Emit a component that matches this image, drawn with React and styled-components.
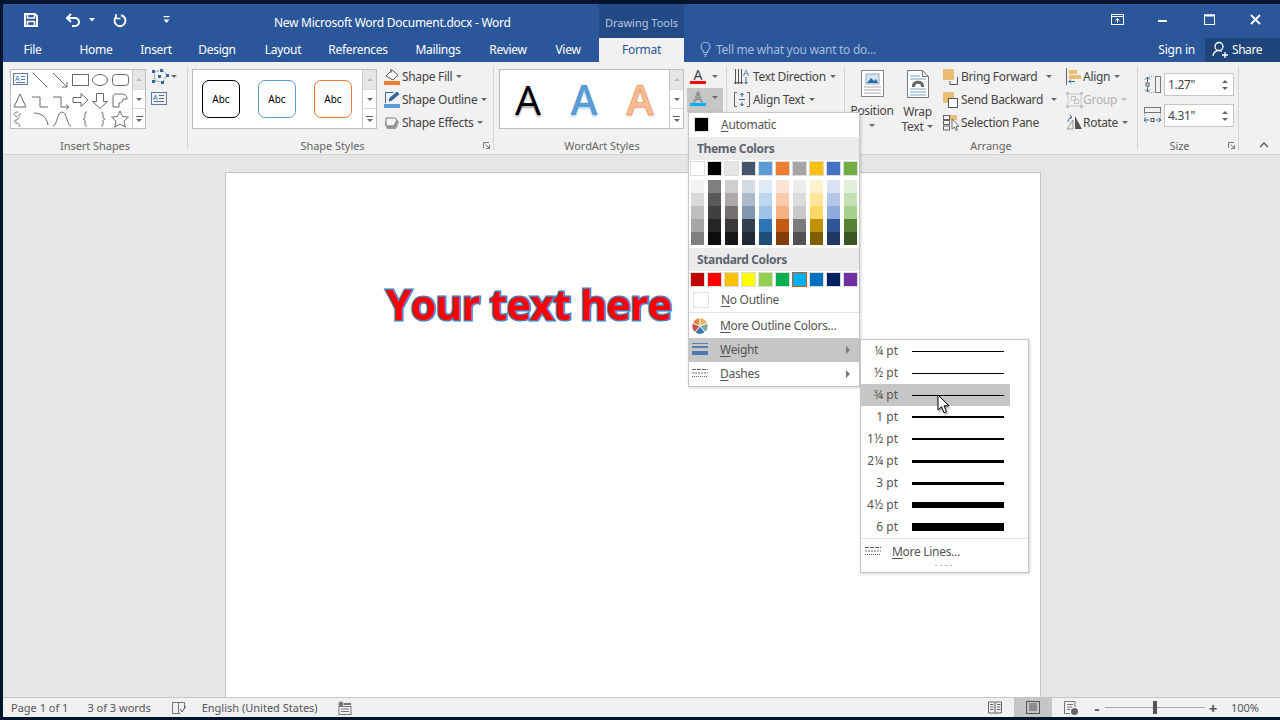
import React from "react"
import styled, { createGlobalStyle } from "styled-components"

const GlobalStyle = createGlobalStyle`
  html, body { margin: 0; padding: 0; background: #02132e; }
  body { font-family: "Noto Sans", "Open Sans", sans-serif; font-size: 12px; color: #444; }
  * { box-sizing: border-box; }
  u { text-underline-offset: 2px; }
`

const Window = styled.div`
  position: relative;
  width: 1280px;
  height: 720px;
  overflow: hidden;
  display: flex;
  flex-direction: column;
  padding: 4px 0 3px 3px;
  background: #02132e;
`
const TitleBar = styled.div`
  height: 34px;
  display: flex;
  align-items: center;
  background: #2b579a;
  color: #fff;
`
const Qat = styled.div`
  width: 271px;
  height: 100%;
  display: flex;
  align-items: center;
  padding-bottom: 2px;
`
const QatButton = styled.span`
  display: flex;
  margin-left: ${p => p.$gap}px;
`
const DocTitle = styled.div`
  width: 325px;
  padding-top: 2px;
  white-space: nowrap;
  letter-spacing: -0.27px;
`
const ContextTab = styled.div`
  width: 85px;
  height: 100%;
  background: #234a84;
  color: #b4c6e3;
  font-size: 11px;
  text-align: center;
  padding-top: 11px;
`
const WinButtons = styled.div`
  margin-left: auto;
  display: flex;
  padding: 0 2px 2px 0;
`
const WinButton = styled.span`
  width: 46px;
  display: flex;
  justify-content: center;
`
const TabRow = styled.div`
  height: 24px;
  display: flex;
  align-items: stretch;
  background: #2b579a;
`
const Tab = styled.div`
  width: ${p => p.$w}px;
  margin-right: ${p => p.$after || 0}px;
  display: flex;
  align-items: center;
  justify-content: center;
  padding-bottom: 1px;
  color: ${p => (p.$active ? "#2b579a" : "#fff")};
  background: ${p => (p.$active ? "#f1f1f1" : "transparent")};
  letter-spacing: -0.3px;
`
const Search = styled.div`
  margin-left: 16px;
  display: flex;
  align-items: center;
  gap: 5px;
  padding-bottom: 1px;
  color: #a6bcdd;
  letter-spacing: -0.27px;
`
const SignIn = styled.div`
  margin-left: auto;
  display: flex;
  align-items: stretch;
  color: #fff;
  letter-spacing: -0.2px;
`
const SignInText = styled.span`
  display: flex;
  align-items: center;
  padding-bottom: 2px;
`
const Share = styled.div`
  width: 75px;
  margin-left: 10px;
  display: flex;
  align-items: center;
  gap: 3px;
  padding: 0 0 1px 7px;
  color: #fff;
  background: #1f4479;
  letter-spacing: -0.45px;
`
const Ribbon = styled.div`
  height: 93px;
  display: flex;
  background: #f1f1f1;
  border-bottom: 1px solid #d2d2d2;
`
const Group = styled.div`
  width: ${p => p.$w}px;
  display: flex;
  flex-direction: column;
`
const GroupBody = styled.div`
  height: 72px;
  display: flex;
  align-items: flex-start;
  padding-left: ${p => p.$left || 0}px;
`
const GroupLabel = styled.div`
  position: relative;
  height: 20px;
  font-size: 11px;
  color: #666;
  text-align: center;
  padding: 4px ${p => p.$right || 0}px 0 0;
  letter-spacing: -0.05px;
`
const Launcher = styled.span`
  position: absolute;
  right: 3px;
  top: 8px;
  display: flex;
`
const Sep = styled.div`
  width: 1px;
  height: 84px;
  margin-top: 4px;
  background: #d6d6d6;
`
const Gallery = styled.div`
  width: ${p => p.$w}px;
  height: 60px;
  margin-top: 7px;
  display: flex;
  background: #fff;
  border: 1px solid #bdbdbd;
`
const GalleryItems = styled.div`
  flex: 1;
  display: flex;
  align-items: center;
  gap: ${p => p.$gap || 0}px;
  padding-left: ${p => p.$left || 0}px;
`
const ScrollCol = styled.div`
  width: 14px;
  display: flex;
  flex-direction: column;
  border-left: 1px solid #c8c8c8;
  background: #fff;
`
const ScrollCell = styled.div`
  flex: 1;
  display: flex;
  align-items: center;
  justify-content: center;
  background: ${p => (p.$off ? "#e6e6e6" : "#fff")};
  border-bottom: 1px solid #dcdcdc;
  &:last-child { border-bottom: 0; }
`
const Up = styled.span`
  width: 0;
  height: 0;
  border: 3px solid transparent;
  border-top: 0;
  border-bottom: 3px solid ${p => p.$c || "#777"};
`
const Caret = styled.span`
  width: 0;
  height: 0;
  flex: none;
  margin-left: ${p => p.$gap ?? 4}px;
  border: 3px solid transparent;
  border-bottom: 0;
  border-top: 3px solid ${p => (p.$off ? "#bbb" : "#666")};
`
const MoreLine = styled.span`
  width: 7px;
  height: 6px;
  border-top: 1px solid #666;
  position: relative;
  display: flex;
  justify-content: center;
  align-items: flex-end;
`
const SideTools = styled.div`
  margin: 7px 0 0 5px;
  display: flex;
  flex-direction: column;
  gap: 8px;
`
const Row = styled.div`
  display: flex;
  align-items: center;
`
const Stack = styled.div`
  margin: 3px 0 0 ${p => p.$left || 0}px;
  display: flex;
  flex-direction: column;
`
const Tool = styled.div`
  height: 23px;
  display: flex;
  align-items: center;
  white-space: nowrap;
  letter-spacing: -0.32px;
  color: ${p => (p.$off ? "#b1b1b1" : "#444")};
`
const ToolIcon = styled.span`
  width: ${p => p.$w || 18}px;
  flex: none;
  display: flex;
`
const AbcBox = styled.div`
  width: 38px;
  height: 38px;
  border-radius: 7px;
  border: 1.5px solid ${p => p.$c};
  display: flex;
  align-items: center;
  justify-content: center;
  font-size: 10px;
  color: #000;
`
const ArtLetter = styled.span`
  width: 56px;
  text-align: center;
  font-family: "Open Sans", sans-serif;
  font-weight: ${p => p.$weight};
  font-size: 41px;
  line-height: 1;
  color: ${p => p.$c};
  text-shadow: 0 2px 2px ${p => p.$shade};
  -webkit-text-stroke: ${p => (p.$stroke ? `0.6px ${p.$stroke}` : "0")};
`
const TextEffects = styled.div`
  width: 36px;
  margin: 4px 0 0 3px;
  display: flex;
  flex-direction: column;
`
const LetterBtn = styled.div`
  height: ${p => p.$h}px;
  display: flex;
  align-items: center;
  padding: 0 0 ${p => p.$pb}px 3px;
  background: ${p => (p.$on ? "#c6c6c6" : "transparent")};
`
const LetterMark = styled.span`
  width: 16px;
  display: flex;
  flex-direction: column;
  align-items: center;
  font-size: 14px;
  line-height: 13px;
  color: ${p => (p.$outline ? "#f4f4f4" : "#444")};
  -webkit-text-stroke: ${p => (p.$outline ? "0.6px #555" : "0")};
  &::after {
    content: "";
    width: 16px;
    height: 3px;
    background: ${p => p.$bar};
  }
`
const BigTool = styled.div`
  width: ${p => p.$w}px;
  margin-top: 8px;
  display: flex;
  flex-direction: column;
  align-items: center;
  line-height: 15px;
  letter-spacing: -0.3px;
`
const BigLabel = styled.div`
  margin-top: 6px;
  text-align: center;
`
const CaretLine = styled.div`
  height: 14px;
  display: flex;
  align-items: center;
  justify-content: center;
`
const SizeRows = styled.div`
  margin: 11px 0 0 6px;
  display: flex;
  flex-direction: column;
  gap: 8px;
`
const SizeInput = styled.div`
  width: 70px;
  height: 23px;
  margin-left: 3px;
  display: flex;
  align-items: center;
  justify-content: space-between;
  padding: 0 5px 0 3px;
  background: #fff;
  border: 1px solid #c6c6c6;
  letter-spacing: -0.3px;
`
const Spin = styled.span`
  display: flex;
  flex-direction: column;
  gap: 4px;
`
const Collapse = styled.div`
  flex: 1;
  display: flex;
  align-items: flex-end;
  justify-content: center;
  padding: 0 0 6px 8px;
`
const DocArea = styled.div`
  flex: 1;
  min-height: 0;
  padding: 17px 0 0 222px;
  background: #e6e6e6;
  display: flex;
`
const Page = styled.div`
  width: 816px;
  background: #fff;
  border: 1px solid #c6c6c6;
  border-bottom: 0;
  padding: 103px 0 0 160px;
`
const ArtText = styled.div`
  font-family: "Open Sans", sans-serif;
  font-weight: 700;
  font-size: 41px;
  line-height: 56px;
  letter-spacing: -0.72px;
  white-space: nowrap;
  color: #ff0000;
  -webkit-text-stroke: 3px #4a7ebb;
  paint-order: stroke fill;
  text-shadow: 1px 1px 0 #4a7ebb;
`
const StatusBar = styled.div`
  height: 20px;
  display: flex;
  align-items: center;
  background: #f1f1f1;
  border-top: 1px solid #c6c6c6;
  color: #555;
  font-size: 11px;
  padding-left: 8px;
`
const StatusText = styled.span`
  margin-left: ${p => p.$gap || 0}px;
  white-space: nowrap;
`
const StatusIcon = styled.span`
  margin-left: ${p => p.$gap}px;
  display: flex;
`
const StatusRight = styled.div`
  margin-left: auto;
  height: 100%;
  display: flex;
  align-items: center;
  padding-right: 21px;
`
const ViewGroup = styled.div`
  height: 100%;
  display: flex;
  margin-right: 2px;
`
const ViewBtn = styled.span`
  width: 38px;
  height: 100%;
  display: flex;
  align-items: center;
  justify-content: center;
  background: ${p => (p.$on ? "#c6c6c6" : "transparent")};
`
const ZoomSlider = styled.div`
  position: relative;
  width: 100px;
  height: 1px;
  margin: 0 3px;
  background: #a8a8a8;
`
const ZoomThumb = styled.span`
  position: absolute;
  left: 48px;
  top: -6px;
  width: 4px;
  height: 13px;
  background: #555;
`
const ZoomSign = styled.span`
  width: 10px;
  text-align: center;
  font-size: 15px;
  font-weight: 700;
  line-height: 14px;
  color: #555;
`
const Menu = styled.div`
  position: absolute;
  left: ${p => p.$x}px;
  top: ${p => p.$y}px;
  width: ${p => p.$w}px;
  height: ${p => p.$h}px;
  background: #fff;
  border: 1px solid #c6c6c6;
  box-shadow: 1px 1px 3px rgba(0, 0, 0, 0.18);
`
const MenuHead = styled.div`
  height: 23px;
  margin-top: ${p => p.$top || 0}px;
  padding-left: 8px;
  display: flex;
  align-items: center;
  background: #ebebeb;
  color: #5d6470;
  font-weight: 700;
  letter-spacing: -0.35px;
`
const MenuItem = styled.div`
  height: ${p => p.$h || 24}px;
  margin-top: ${p => p.$top || 0}px;
  display: flex;
  align-items: center;
  padding-bottom: 1px;
  background: ${p => (p.$on ? "#c6c6c6" : "transparent")};
  color: #555;
  letter-spacing: -0.3px;
`
const MenuIcon = styled.span`
  width: ${p => p.$w}px;
  flex: none;
  display: flex;
  padding-left: ${p => p.$left}px;
`
const Arrow = styled.span`
  width: 0;
  height: 0;
  margin: 0 9px 0 auto;
  border: 4px solid transparent;
  border-right: 0;
  border-left: 4px solid #7a7a7a;
`
const Divider = styled.div`
  height: 1px;
  margin-top: ${p => p.$top || 0}px;
  margin-bottom: ${p => p.$bottom || 0}px;
  background: #e2e2e2;
`
const SwatchRow = styled.div`
  display: flex;
  gap: 4px;
  padding-left: 2px;
  margin-top: ${p => p.$top}px;
`
const Swatch = styled.span`
  width: 13px;
  height: 13px;
  background: ${p => p.$c};
  box-shadow: ${p =>
    p.$picked ? "0 0 0 1px #c55a11" : p.$ring ? "0 0 0 1px #dcdcdc" : "none"};
`
const ShadeCol = styled.span`
  width: 13px;
  display: flex;
  flex-direction: column;
`
const Shade = styled.span`
  height: 13px;
  background: ${p => p.$c};
`
const ColorChip = styled.span`
  width: ${p => p.$s}px;
  height: ${p => p.$s}px;
  margin-left: ${p => p.$left}px;
  margin-right: ${p => p.$right}px;
  background: ${p => p.$c};
  border: 1px solid ${p => p.$line};
`
const WeightList = styled.div`
  width: 149px;
`
const WeightRow = styled.div`
  height: 22px;
  display: flex;
  align-items: center;
  background: ${p => (p.$on ? "#c6c6c6" : "transparent")};
  color: #555;
`
const WeightLabel = styled.span`
  width: 37px;
  margin: 0 14px -1px 0;
  padding-bottom: 2px;
  text-align: right;
  white-space: nowrap;
`
const WeightLine = styled.span`
  width: 92px;
  height: ${p => p.$t}px;
  background: #000;
`
const Grip = styled.div`
  display: flex;
  justify-content: center;
  gap: 3px;
  margin-top: 2px;
  padding-right: 2px;
`
const GripDot = styled.span`
  width: 2px;
  height: 1px;
  background: #b5b5b5;
`
const Cursor = styled.span`
  position: absolute;
  left: 937px;
  top: 394px;
  display: flex;
  filter: drop-shadow(1px 2px 1px rgba(0, 0, 0, 0.35));
`

const THEME = [
  ["#ffffff", "#f2f2f2", "#d9d9d9", "#bfbfbf", "#a6a6a6", "#7f7f7f"],
  ["#000000", "#7f7f7f", "#595959", "#404040", "#262626", "#0d0d0d"],
  ["#e7e6e6", "#d0cece", "#aeaaaa", "#757070", "#3a3838", "#171616"],
  ["#44546a", "#d6dce5", "#adb9ca", "#8497b0", "#323f4f", "#222a35"],
  ["#5b9bd5", "#deebf7", "#bdd7ee", "#9dc3e6", "#2e75b6", "#1f4e79"],
  ["#ed7d31", "#fbe5d6", "#f8cbad", "#f4b183", "#c55a11", "#843c0c"],
  ["#a5a5a5", "#ededed", "#dbdbdb", "#c9c9c9", "#7b7b7b", "#525252"],
  ["#ffc000", "#fff2cc", "#ffe699", "#ffd966", "#bf9000", "#7f6000"],
  ["#4472c4", "#dae3f3", "#b4c7e7", "#8faadc", "#2f5597", "#203864"],
  ["#70ad47", "#e2f0d9", "#c5e0b4", "#a9d18e", "#548235", "#385723"],
]
const STANDARD = ["#c00000", "#ff0000", "#ffc000", "#ffff00", "#92d050", "#00b050", "#00b0f0", "#0070c0", "#002060", "#7030a0"]
const WEIGHTS = [["¼ pt", 1], ["½ pt", 1], ["¾ pt", 1], ["1 pt", 2], ["1½ pt", 2], ["2¼ pt", 3], ["3 pt", 3], ["4½ pt", 6], ["6 pt", 8]]
const TABS = [["File", 59], ["Home", 68], ["Insert", 52], ["Design", 70], ["Layout", 62], ["References", 88], ["Mailings", 72], ["Review", 68], ["View", 52, 5]]

const SaveIcon = () => (
  <svg width="16" height="16" viewBox="0 0 16 16" fill="none" stroke="#fff" strokeWidth="2">
    <path d="M2 2h10l2 2v10H2z" /><path d="M4.5 2v4h7V2M4.5 14V9.5h7V14" strokeWidth="1.6" />
  </svg>
)
const UndoIcon = () => (
  <svg width="16" height="14" viewBox="0 0 16 14" fill="none" stroke="#fff" strokeWidth="2">
    <path d="M6 1L2 5l4 4" /><path d="M2.5 5H10a4 4 0 0 1 0 8H7" />
  </svg>
)
const RedoIcon = () => (
  <svg width="15" height="15" viewBox="0 0 15 15" fill="none" stroke="#fff" strokeWidth="2">
    <path d="M8 2.2a5.5 5.5 0 1 1-5 1.6" /><path d="M3 1v4.5h4.5" strokeWidth="1.6" />
  </svg>
)
const CustomizeIcon = () => (
  <svg width="7" height="8" viewBox="0 0 7 8" fill="#fff"><rect width="6" height="1.2" x="0.5" /><path d="M0.5 3.5h6L3.5 7z" /></svg>
)
const WhiteCaret = () => (
  <svg width="6" height="4" viewBox="0 0 6 4" fill="#fff"><path d="M0 0h6L3 3.5z" /></svg>
)
const Bulb = () => (
  <svg width="11" height="15" viewBox="0 0 11 15" fill="none" stroke="#a6bcdd" strokeWidth="1.1">
    <path d="M3.5 10.5C3.5 8 1 7.5 1 4.8a4.5 4.5 0 0 1 9 0C10 7.5 7.5 8 7.5 10.5zM3.8 12.5h3.4M4.5 14.3h2" />
  </svg>
)
const Person = () => (
  <svg width="17" height="17" viewBox="0 0 17 17" fill="none" stroke="#fff" strokeWidth="1.3">
    <circle cx="7" cy="5.5" r="4" /><path d="M1 15c.5-3.5 3-5.5 6-5.5 1 0 2 .2 2.8.7M10 14h6M13 11v6" />
  </svg>
)

const ShapesGrid = () => (
  <svg width="121" height="58" viewBox="1 0 121 58" fill="none" stroke="#6a6a6a" strokeWidth="1">
    <rect x="3.5" y="3.5" width="14" height="11" stroke="#5a7ea8" />
    <text x="5" y="11" fontSize="7" fill="#2b6cb0" stroke="none" fontFamily="Liberation Sans">A</text>
    <path d="M11 6.5h4M11 9.5h4M6 12.5h9" stroke="#5a7ea8" />
    <path d="M23 3l14 14M43 3l14 14M57 12v5h-5" />
    <rect x="62.5" y="4.5" width="16" height="11" />
    <ellipse cx="90" cy="10" rx="7.5" ry="5.5" />
    <rect x="102.5" y="4.5" width="16" height="11" rx="3" />
    <path d="M4 37L10 24l6 13zM22 27h8v10h8M43 27h8v10h7M56 34.500l3 2.500-3 2.500" />
    <path d="M63 27.500h8v-4l7 6.500-7 6.500v-4h-8zM86.500 23.500h7v8h4l-7.500 7-7.500-7h4z" />
    <path d="M103 37V27c0-2 1-3 3-3h6c3 0 5 2 5 5h-4c0 3-2 4-4 4v4z" />
    <path d="M8 42c-4 0-5 3-2 4 3 2 3 4 0 4-2 0-2 3 1 3 3 1 3 3 2 4M11 44c-2 0-3 2-1 3" />
    <path d="M24 43c7 0 13 4 14 12M43 56c4 0 4-14 9-14s5 14 9 14" />
    <path d="M73 42c-2 0-2 1-2 3v2c0 1-1 2-2 2 1 0 2 1 2 2v2c0 2 0 3 2 3M87 42c2 0 2 1 2 3v2c0 1 1 2 2 2-1 0-2 1-2 2v2c0 2 0 3-2 3" transform="translate(4 0)" />
    <path d="M110 41l2.500 5.500 6 .6-4.500 4 1.300 6-5.300-3-5.300 3 1.300-6-4.500-4 6-.6z" />
  </svg>
)
const EditShape = () => (
  <svg width="18" height="15" viewBox="0 0 18 15" fill="#31669f">
    <path d="M3 3L11 1l5 5-4 7-8-1z" fill="none" stroke="#888" strokeDasharray="2 1" />
    <rect x="1" y="1" width="3" height="3" /><rect x="9" y="0" width="3" height="3" /><rect x="15" y="5" width="3" height="3" />
    <rect x="10" y="12" width="3" height="3" /><rect x="1" y="11" width="3" height="3" /><rect x="7" y="6" width="3" height="3" />
  </svg>
)
const TextBoxIcon = () => (
  <svg width="16" height="13" viewBox="0 0 16 13" fill="none" stroke="#5a7ea8">
    <rect x="0.500" y="0.500" width="15" height="12" />
    <text x="2" y="8" fontSize="7" fill="#2b6cb0" stroke="none" fontFamily="Liberation Sans">A</text>
    <path d="M8 3.500h5M8 6.500h5M3 9.500h10" stroke="#6a6a6a" />
  </svg>
)
const FillIcon = () => (
  <svg width="16" height="17" viewBox="0 0 16 17" fill="none" stroke="#555">
    <path d="M2 8l6-6 6 5-5 5z" fill="#fff" /><path d="M7 5V1" />
    <rect x="0" y="13" width="16" height="4" fill="#ed7d31" stroke="none" />
  </svg>
)
const OutlineIcon = () => (
  <svg width="16" height="17" viewBox="0 0 16 17" fill="none" stroke="#31669f">
    <path d="M1.500 12V1.500h8" /><path d="M5 10l1-3 7-6 2 2-7 6z" fill="#31669f" />
    <rect x="0" y="13" width="16" height="4" fill="#5b9bd5" stroke="none" />
  </svg>
)
const EffectsIcon = () => (
  <svg width="16" height="15" viewBox="0 0 16 15"><path d="M3 4h9l3 3-3 7H3L1 9z" fill="#9a9a9a" /><path d="M2 3h9l2 2-3 6H2z" fill="#f5f5f5" stroke="#777" /></svg>
)
const TextDirIcon = () => (
  <svg width="16" height="17" viewBox="0 0 16 17" fill="none" stroke="#555">
    <path d="M1.500 1v15M4.500 1v15M7.500 1v15M0 14l1.500 2 1.500-2M3 14l1.500 2 1.500-2M6 14l1.500 2 1.500-2" />
    <text x="9" y="8" fontSize="9" fill="#31669f" stroke="none" fontFamily="Liberation Sans">A</text>
    <path d="M12 9v7M10.500 14l1.500 2 1.500-2" stroke="#31669f" />
  </svg>
)
const AlignTextIcon = () => (
  <svg width="16" height="15" viewBox="0 0 16 15" fill="none" stroke="#666">
    <path d="M3 .5H.5v14H3M13 .5h2.500v14H13" />
    <path d="M5 7.500h6M8 1v4M8 10v4M6.500 3l1.500-2 1.500 2M6.500 12l1.500 2 1.500-2" stroke="#31669f" />
  </svg>
)
const PositionIcon = () => (
  <svg width="23" height="27" viewBox="0 0 23 27" fill="none" stroke="#888">
    <rect x="0.500" y="0.500" width="22" height="26" fill="#fff" />
    <rect x="5" y="4" width="13" height="10" fill="#d6e5f3" stroke="#9ab" />
    <path d="M6 13l4-5 3 3 2-2 2 4z" fill="#2b6ca8" stroke="none" />
    <path d="M3 17h17M3 20h17M3 23h17" stroke="#aaa" />
  </svg>
)
const WrapIcon = () => (
  <svg width="22" height="28" viewBox="0 0 22 28" fill="none" stroke="#777">
    <path d="M.500.500h15l6 6v21H.500z" fill="#fff" /><path d="M15.500.500v6h6" />
    <path d="M3 6h10M3 9h16M3 19h16M3 22h16M3 25h16" stroke="#7ba3c7" />
    <path d="M5 17v-1c0-7 12-7 12 0v1h-3v-1c0-3-6-3-6 0v1z" fill="#666" stroke="none" />
  </svg>
)
const ForwardIcon = () => (
  <svg width="15" height="16" viewBox="0 0 15 16" fill="none" stroke="#555">
    <path d="M14.500 8v7.500H7V12" /><rect x="0" y="0" width="11" height="11" fill="#e9bd73" stroke="none" />
  </svg>
)
const BackwardIcon = () => (
  <svg width="15" height="16" viewBox="0 0 15 16" fill="none" stroke="#555">
    <rect x="0" y="0" width="11" height="11" fill="#e9bd73" stroke="none" /><rect x="5.500" y="6.500" width="9" height="9" fill="#fff" />
  </svg>
)
const PaneIcon = () => (
  <svg width="16" height="16" viewBox="0 0 16 16" fill="none" stroke="#666">
    <rect x="0.500" y="0.500" width="6" height="4" /><rect x="0.500" y="5.500" width="6" height="4" /><rect x="0.500" y="11" width="6" height="4" />
    <rect x="7" y="0" width="7" height="5" fill="#e9bd73" stroke="none" />
    <path d="M9 4v10l2.500-2 1.500 3.500 1.500-.6-1.500-3.400h3z" fill="#fff" />
  </svg>
)
const AlignIcon = () => (
  <svg width="15" height="17" viewBox="0 0 15 17" fill="none">
    <path d="M.500 0v17" stroke="#666" /><rect x="3" y="2" width="8" height="4" fill="#e9bd73" /><rect x="3" y="7" width="12" height="4" fill="#e9bd73" />
    <path d="M9 13.500H3M5 11.500l-2 2 2 2" stroke="#31669f" />
  </svg>
)
const GroupIcon = () => (
  <svg width="17" height="16" viewBox="0 0 17 16" fill="none" stroke="#c4c4c4">
    <path d="M2 2h13v12H2z" /><rect x="5.500" y="4.500" width="4" height="4" /><rect x="8.500" y="7.500" width="4" height="4" />
    <g fill="#c4c4c4" stroke="none"><rect width="3" height="3" /><rect x="14" width="3" height="3" /><rect y="13" width="3" height="3" /><rect x="14" y="13" width="3" height="3" /></g>
  </svg>
)
const RotateIcon = () => (
  <svg width="16" height="15" viewBox="0 0 16 15" fill="none" stroke="#999">
    <path d="M1 14L7 5v9z" /><path d="M9 1L16 14H9z" fill="#555" stroke="none" />
    <path d="M2 7c0-3 2-5 4-5M4 0L6 2 4 4" stroke="#31669f" />
  </svg>
)
const HeightIcon = () => (
  <svg width="17" height="17" viewBox="0 0 17 17" fill="none" stroke="#31669f">
    <path d="M3.500 1v5M1 3.500l2.500-2.500L6 3.500M3.500 11v5M1 13.500L3.500 16 6 13.500" /><rect x="2" y="7" width="3" height="3" stroke="#555" />
    <rect x="11.500" y="0.500" width="5" height="16" stroke="#777" /><path d="M5 .5h5M5 16.500h5" stroke="#999" strokeDasharray="1 1" />
  </svg>
)
const WidthIcon = () => (
  <svg width="17" height="17" viewBox="0 0 17 17" fill="none" stroke="#31669f">
    <rect x="0.500" y="0.500" width="16" height="5" stroke="#777" /><path d="M.500 6v5M16.500 6v5" stroke="#999" strokeDasharray="1 1" />
    <path d="M0 13h5M2.500 10.500L0 13l2.500 2.500M12 13h5M14.500 10.500L17 13l-2.500 2.500" /><rect x="7" y="11.500" width="3" height="3" stroke="#555" />
  </svg>
)
const LauncherIcon = () => (
  <svg width="7" height="7" viewBox="0 0 7 7" fill="none" stroke="#777">
    <path d="M.500 6V.500H6" /><path d="M2.500 2.500L6 6M3 6.500h3.500V3" />
  </svg>
)
const CollapseIcon = () => (
  <svg width="10" height="6" viewBox="0 0 10 6" fill="none" stroke="#555" strokeWidth="1.4"><path d="M1 5l4-4 4 4" /></svg>
)
const WheelIcon = () => (
  <svg width="16" height="16" viewBox="0 0 16 16" stroke="#fff" strokeWidth="0.8">
    <path d="M8 8V0a8 8 0 0 0-7.500 5.300z" fill="#d9884a" /><path d="M8 8V0a8 8 0 0 1 7.500 5.300z" fill="#e3b45d" />
    <path d="M8 8l7.500-2.700A8 8 0 0 1 13 14.300z" fill="#7fa89a" /><path d="M8 8l5 6.300A8 8 0 0 1 3 14.300z" fill="#3d73b4" />
    <path d="M8 8L3 14.300A8 8 0 0 1 .5 5.300z" fill="#c9534a" />
  </svg>
)
const WeightIcon = () => (
  <svg width="16" height="13" viewBox="0 0 16 13">
    <rect y="0" width="16" height="1" fill="#5b7fae" /><rect y="3" width="16" height="2" fill="#5b7fae" /><rect y="8" width="16" height="4" fill="#4a78b0" />
  </svg>
)
const DashesIcon = () => (
  <svg width="16" height="9" viewBox="0 0 16 9" fill="none" stroke="#666">
    <path d="M0 .5h16" strokeDasharray="4 1" /><path d="M0 4h16" strokeDasharray="2 1" /><path d="M0 7.500h16" strokeDasharray="1 1" />
  </svg>
)
const ArrowCursor = () => (
  <svg width="14" height="20" viewBox="0 0 14 20">
    <path d="M1 1v15l3.500-3.300 2.500 6 2.500-1-2.500-5.900H12z" fill="#fff" stroke="#000" strokeWidth="1" />
  </svg>
)
const ProofIcon = () => (
  <svg width="14" height="14" viewBox="0 0 14 14" fill="none" stroke="#777">
    <path d="M6.500 1.500H.500v11h6M6.500 1v12M6.500 1.500h6V7M6.500 12.500h2" /><path d="M8 8l2 3 4-6" stroke="#555" />
  </svg>
)
const MacroIcon = () => (
  <svg width="14" height="14" viewBox="0 0 14 14" fill="#777">
    <circle cx="3" cy="3" r="2.500" /><rect x="1" y="5.500" width="12" height="8" fill="none" stroke="#777" />
    <rect x="6" y="2" width="7" height="2" /><rect x="3" y="7.500" width="8" height="1" /><rect x="3" y="10" width="8" height="1" />
  </svg>
)
const ReadIcon = () => (
  <svg width="14" height="13" viewBox="0 0 14 13" fill="none" stroke="#666">
    <path d="M.500 1h6l.500 1 .500-1h6v11h-6L7 12.500 6.500 12h-6zM7 2v10M2 3.500h3.500M2 6h3.500M2 8.500h3.500M9 3.500h3.500M9 6h3.500M9 8.500h3.500" />
  </svg>
)
const PrintIcon = () => (
  <svg width="14" height="13" viewBox="0 0 14 13" fill="none" stroke="#555">
    <rect x="0.500" y="0.500" width="13" height="12" /><path d="M3 3h8M3 5h8M3 7h8M3 9h8" />
  </svg>
)
const WebIcon = () => (
  <svg width="14" height="14" viewBox="0 0 14 14" fill="none" stroke="#777">
    <path d="M6 12.500H.500V.500H11V6M3 3.500h6M3 6h5M3 8.500h3" /><circle cx="10.500" cy="10.500" r="3.500" fill="#666" stroke="none" />
  </svg>
)

function ScrollButtons() {
  return (
    <ScrollCol>
      <ScrollCell $off><Up $c="#bcbcbc" /></ScrollCell>
      <ScrollCell><Caret $gap={0} /></ScrollCell>
      <ScrollCell><MoreLine><Caret $gap={0} /></MoreLine></ScrollCell>
    </ScrollCol>
  )
}

function ColorMenu() {
  return (
    <Menu $x={688} $y={112} $w={172} $h={275}>
      <MenuItem>
        <ColorChip $s={15} $left={5} $right={12} $c="#000" $line="#dcdcdc" />
        <span><u>A</u>utomatic</span>
      </MenuItem>
      <MenuHead>Theme Colors</MenuHead>
      <SwatchRow $top={2}>
        {THEME.map((col, i) => <Swatch key={i} $c={col[0]} $ring />)}
      </SwatchRow>
      <SwatchRow $top={5}>
        {THEME.map((col, i) => (
          <ShadeCol key={i}>
            {col.slice(1).map(c => <Shade key={c} $c={c} />)}
          </ShadeCol>
        ))}
      </SwatchRow>
      <MenuHead $top={3}>Standard Colors</MenuHead>
      <SwatchRow $top={2}>
        {STANDARD.map((c, i) => <Swatch key={c} $c={c} $ring $picked={i === 6} />)}
      </SwatchRow>
      <MenuItem $h={22} $top={3}>
        <ColorChip $s={16} $left={4} $right={12} $c="#fff" $line="#e0e0e0" />
        <span><u>N</u>o Outline</span>
      </MenuItem>
      <Divider $top={1} $bottom={1} />
      <MenuItem>
        <MenuIcon $w={31} $left={3}><WheelIcon /></MenuIcon>
        <span><u>M</u>ore Outline Colors...</span>
      </MenuItem>
      <MenuItem $on>
        <MenuIcon $w={31} $left={3}><WeightIcon /></MenuIcon>
        <span><u>W</u>eight</span>
        <Arrow />
      </MenuItem>
      <MenuItem>
        <MenuIcon $w={31} $left={3}><DashesIcon /></MenuIcon>
        <span><u>D</u>ashes</span>
        <Arrow />
      </MenuItem>
    </Menu>
  )
}

function WeightMenu() {
  return (
    <Menu $x={860} $y={339} $w={169} $h={234}>
      <WeightList>
        {WEIGHTS.map(([label, t], i) => (
          <WeightRow key={label} $on={i === 2}>
            <WeightLabel>{label}</WeightLabel>
            <WeightLine $t={t} />
          </WeightRow>
        ))}
      </WeightList>
      <Divider $top={0} />
      <MenuItem $top={1} $h={23}>
        <MenuIcon $w={31} $left={4}><DashesIcon /></MenuIcon>
        <span><u>M</u>ore Lines...</span>
      </MenuItem>
      <Grip><GripDot /><GripDot /><GripDot /><GripDot /></Grip>
    </Menu>
  )
}

export default function App() {
  return (
    <Window>
      <GlobalStyle />
      <TitleBar>
        <Qat>
          <QatButton $gap={20}><SaveIcon /></QatButton>
          <QatButton $gap={26}><UndoIcon /></QatButton>
          <QatButton $gap={8}><WhiteCaret /></QatButton>
          <QatButton $gap={18}><RedoIcon /></QatButton>
          <QatButton $gap={35}><CustomizeIcon /></QatButton>
        </Qat>
        <DocTitle>New Microsoft Word Document.docx - Word</DocTitle>
        <ContextTab>Drawing Tools</ContextTab>
        <WinButtons>
          <WinButton>
            <svg width="13" height="11" viewBox="0 0 13 11" fill="none" stroke="#fff"><rect x="0.500" y="0.500" width="12" height="10" /><path d="M0 2.500h13" /><path d="M6.500 9V4.500M4.500 6.500l2-2 2 2" /></svg>
          </WinButton>
          <WinButton>
            <svg width="10" height="12" viewBox="0 0 10 12" fill="#fff"><rect y="6" width="9" height="2" /></svg>
          </WinButton>
          <WinButton>
            <svg width="11" height="11" viewBox="0 0 11 11" fill="none" stroke="#fff"><rect x="0.500" y="1" width="10" height="9.500" strokeWidth="1" /><path d="M0 1.500h11" strokeWidth="2" /></svg>
          </WinButton>
          <WinButton>
            <svg width="11" height="11" viewBox="0 0 11 11" fill="none" stroke="#fff" strokeWidth="1.8"><path d="M1 1l9 9M10 1l-9 9" /></svg>
          </WinButton>
        </WinButtons>
      </TitleBar>
      <TabRow>
        {TABS.map(([name, w, after]) => <Tab key={name} $w={w} $after={after}>{name}</Tab>)}
        <Tab $w={85} $active>Format</Tab>
        <Search><Bulb />Tell me what you want to do...</Search>
        <SignIn>
          <SignInText>Sign in</SignInText>
          <Share><Person />Share</Share>
        </SignIn>
      </TabRow>
      <Ribbon>
        <Group $w={184}>
          <GroupBody $left={7}>
            <Gallery $w={136}>
              <GalleryItems><ShapesGrid /></GalleryItems>
              <ScrollButtons />
            </Gallery>
            <SideTools>
              <Row><EditShape /><Caret $gap={2} /></Row>
              <Row><TextBoxIcon /></Row>
            </SideTools>
          </GroupBody>
          <GroupLabel>Insert Shapes</GroupLabel>
        </Group>
        <Sep />
        <Group $w={305}>
          <GroupBody $left={4}>
            <Gallery $w={185}>
              <GalleryItems $left={9} $gap={18}>
                <AbcBox $c="#000">Abc</AbcBox>
                <AbcBox $c="#5b9bd5">Abc</AbcBox>
                <AbcBox $c="#ed7d31">Abc</AbcBox>
              </GalleryItems>
              <ScrollButtons />
            </Gallery>
            <Stack $left={7}>
              <Tool><ToolIcon><FillIcon /></ToolIcon>Shape Fill<Caret /></Tool>
              <Tool><ToolIcon><OutlineIcon /></ToolIcon>Shape Outline<Caret /></Tool>
              <Tool><ToolIcon><EffectsIcon /></ToolIcon>Shape Effects<Caret /></Tool>
            </Stack>
          </GroupBody>
          <GroupLabel $right={16}>Shape Styles<Launcher><LauncherIcon /></Launcher></GroupLabel>
        </Group>
        <Sep />
        <Group $w={232}>
          <GroupBody $left={5}>
            <Gallery $w={185}>
              <GalleryItems>
                <ArtLetter $c="#000" $weight={400} $shade="rgba(0,0,0,.35)">A</ArtLetter>
                <ArtLetter $c="#5b9bd5" $weight={600} $shade="rgba(91,155,213,.4)">A</ArtLetter>
                <ArtLetter $c="#f6bd96" $weight={600} $stroke="#ed7d31" $shade="rgba(0,0,0,.12)">A</ArtLetter>
              </GalleryItems>
              <ScrollButtons />
            </Gallery>
            <TextEffects>
              <LetterBtn $h={22} $pb={2}><LetterMark $bar="#ff0000">A</LetterMark><Caret $gap={6} /></LetterBtn>
              <LetterBtn $h={24} $pb={5} $on><LetterMark $bar="#00b0f0" $outline>A</LetterMark><Caret $gap={6} /></LetterBtn>
            </TextEffects>
          </GroupBody>
          <GroupLabel $right={16}>WordArt Styles</GroupLabel>
        </Group>
        <Sep />
        <Group $w={117}>
          <GroupBody $left={7}>
            <Stack>
              <Tool><ToolIcon $w={19}><TextDirIcon /></ToolIcon>Text Direction<Caret /></Tool>
              <Tool><ToolIcon $w={19}><AlignTextIcon /></ToolIcon>Align Text<Caret /></Tool>
            </Stack>
          </GroupBody>
        </Group>
        <Sep />
        <Group $w={292}>
          <GroupBody $left={4}>
            <BigTool $w={46}>
              <PositionIcon />
              <BigLabel>Position</BigLabel>
              <CaretLine><Caret $gap={0} /></CaretLine>
            </BigTool>
            <BigTool $w={45}>
              <WrapIcon />
              <BigLabel>Wrap</BigLabel>
              <CaretLine>Text<Caret /></CaretLine>
            </BigTool>
            <Stack $left={3}>
              <Tool><ToolIcon><ForwardIcon /></ToolIcon>Bring Forward<Caret $gap={9} /></Tool>
              <Tool><ToolIcon><BackwardIcon /></ToolIcon>Send Backward<Caret $gap={8} /></Tool>
              <Tool><ToolIcon><PaneIcon /></ToolIcon>Selection Pane</Tool>
            </Stack>
            <Stack $left={9}>
              <Tool><ToolIcon $w={17}><AlignIcon /></ToolIcon>Align<Caret /></Tool>
              <Tool $off><ToolIcon $w={17}><GroupIcon /></ToolIcon>Group<Caret $off /></Tool>
              <Tool><ToolIcon $w={17}><RotateIcon /></ToolIcon>Rotate<Caret /></Tool>
            </Stack>
          </GroupBody>
          <GroupLabel>Arrange</GroupLabel>
        </Group>
        <Sep />
        <Group $w={100}>
          <GroupBody>
            <SizeRows>
              <Row><HeightIcon /><SizeInput>1.27"<Spin><Up $c="#666" /><Caret $gap={0} /></Spin></SizeInput></Row>
              <Row><WidthIcon /><SizeInput>4.31"<Spin><Up $c="#666" /><Caret $gap={0} /></Spin></SizeInput></Row>
            </SizeRows>
          </GroupBody>
          <GroupLabel $right={17}>Size<Launcher><LauncherIcon /></Launcher></GroupLabel>
        </Group>
        <Sep />
        <Collapse><CollapseIcon /></Collapse>
      </Ribbon>
      <DocArea>
        <Page>
          <ArtText>Your text here</ArtText>
        </Page>
      </DocArea>
      <StatusBar>
        <StatusText>Page 1 of 1</StatusText>
        <StatusText $gap={19}>3 of 3 words</StatusText>
        <StatusIcon $gap={21}><ProofIcon /></StatusIcon>
        <StatusText $gap={16}>English (United States)</StatusText>
        <StatusIcon $gap={20}><MacroIcon /></StatusIcon>
        <StatusRight>
          <ViewGroup>
            <ViewBtn><ReadIcon /></ViewBtn>
            <ViewBtn $on><PrintIcon /></ViewBtn>
            <ViewBtn><WebIcon /></ViewBtn>
          </ViewGroup>
          <ZoomSign>-</ZoomSign>
          <ZoomSlider><ZoomThumb /></ZoomSlider>
          <ZoomSign>+</ZoomSign>
          <StatusText $gap={13}>100%</StatusText>
        </StatusRight>
      </StatusBar>
      <ColorMenu />
      <WeightMenu />
      <Cursor><ArrowCursor /></Cursor>
    </Window>
  )
}
